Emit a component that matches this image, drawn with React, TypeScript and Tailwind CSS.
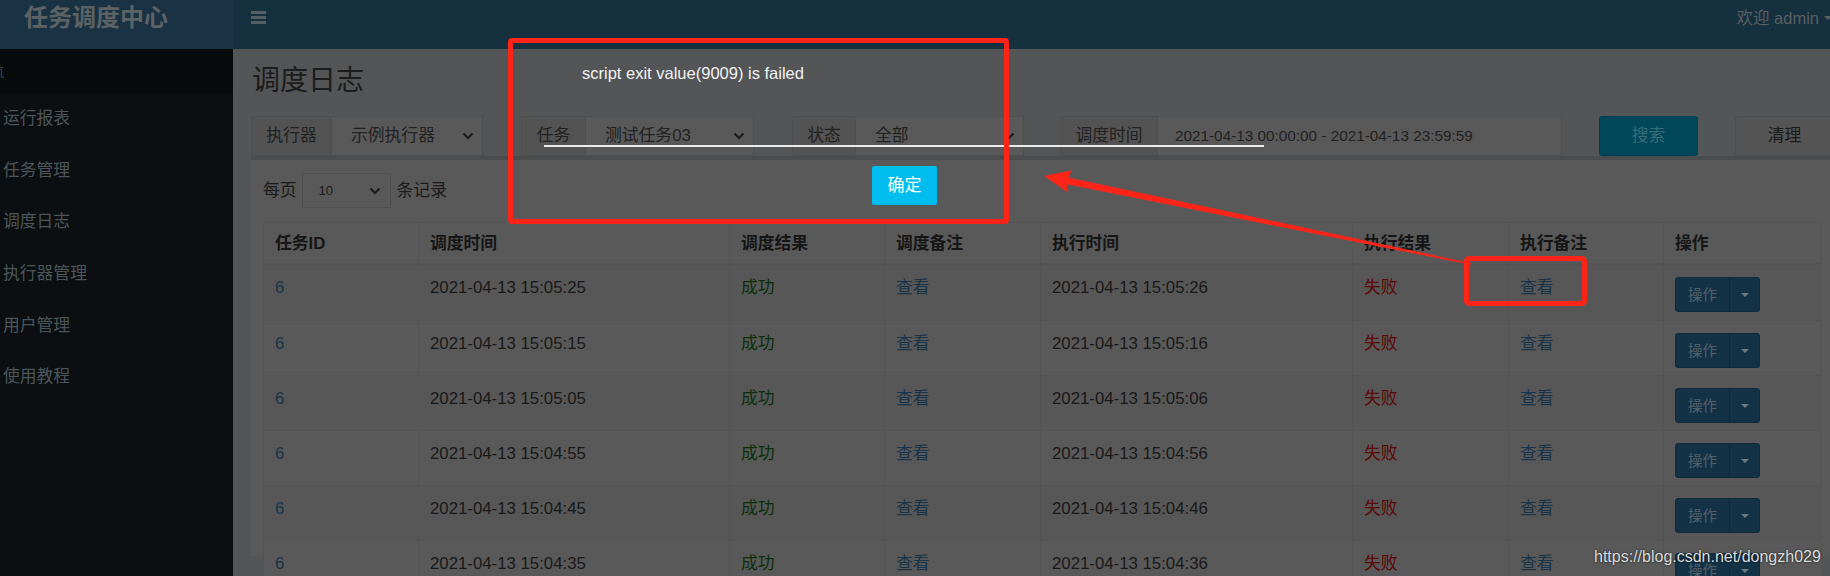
import React from 'react';

const logs = [
  ['2021-04-13 15:05:25', '2021-04-13 15:05:26'],
  ['2021-04-13 15:05:15', '2021-04-13 15:05:16'],
  ['2021-04-13 15:05:05', '2021-04-13 15:05:06'],
  ['2021-04-13 15:04:55', '2021-04-13 15:04:56'],
  ['2021-04-13 15:04:45', '2021-04-13 15:04:46'],
  ['2021-04-13 15:04:35', '2021-04-13 15:04:36'],
];

const navItems = ['运行报表', '任务管理', '调度日志', '执行器管理', '用户管理', '使用教程'];

const cols = 'grid grid-cols-[155px_311px_155px_156px_312px_156px_155px_158px]';

function Chevron() {
  return (
    <svg width="12" height="8" viewBox="0 0 12 8" className="shrink-0">
      <polyline points="1.5,1.5 6,6 10.5,1.5" fill="none" stroke="#1c1c1c" strokeWidth="2" />
    </svg>
  );
}

function FilterSelect({ label, value, labelW, selectW }: { label: string; value: string; labelW: string; selectW: string }) {
  return (
    <div className="flex h-[40px] shrink-0">
      <div className={`${labelW} flex items-center justify-center border border-[#4e4f51] bg-[#535353] text-[16.8px] text-[#222]`}>
        {label}
      </div>
      <div className={`${selectW} flex items-center justify-between border border-l-0 border-[#4e4f51] bg-[#595959] pl-[19px] pr-[8px] text-[16.8px] text-[#222]`}>
        <span>{value}</span>
        <Chevron />
      </div>
    </div>
  );
}

export default function App() {
  return (
    <div className="relative h-[576px] w-[1830px] overflow-hidden bg-[#545557] font-['Liberation_Sans','Noto_Sans_CJK_SC',sans-serif]">
      {/* Header */}
      <header className="flex h-[49px]">
        <div className="w-[233px] shrink-0 bg-[#193344] pl-[24px] pt-[4px] text-[24px] font-bold leading-[28px] text-[#5d6265]">
          任务调度中心
        </div>
        <div className="flex flex-1 items-start justify-between bg-[#15303f]">
          <div className="ml-[18px] mt-[11px] flex w-[15px] flex-col gap-[2px]">
            <span className="h-[3px] bg-[#566064]" />
            <span className="h-[3px] bg-[#566064]" />
            <span className="h-[3px] bg-[#566064]" />
          </div>
          <div className="mt-[7px] flex items-center text-[16.5px] leading-[22px] text-[#5a5f62]">
            <span>欢迎 admin</span>
            <span className="ml-[5px] mr-[-2px] h-0 w-0 border-l-[4px] border-r-[4px] border-t-[4px] border-l-transparent border-r-transparent border-t-[#5a5f62]" />
          </div>
        </div>
      </header>

      <div className="flex h-[527px]">
        {/* Sidebar */}
        <aside className="w-[233px] shrink-0 bg-[#0b0f11]">
          <div className="flex h-[44px] items-center overflow-hidden bg-[#080b0c]">
            <span className="ml-[-24px] text-[14px] text-[#374348]">导航</span>
          </div>
          {navItems.map((item) => (
            <div key={item} className="flex h-[51.6px] items-center pl-[3px] text-[16.8px] text-[#4c565a]">
              {item}
            </div>
          ))}
        </aside>

        {/* Content */}
        <main className="min-w-0 flex-1 overflow-hidden pl-[18px]">
          <h1 className="pl-[1px] pt-[15px] text-[28px] font-normal leading-[34px] text-[#1c1c1c]">调度日志</h1>

          {/* Filters */}
          <div className="mt-[18px] flex h-[40px]">
            <FilterSelect label="执行器" value="示例执行器" labelW="w-[81px]" selectW="w-[151px]" />
            <div className="ml-[38px]">
              <FilterSelect label="任务" value="测试任务03" labelW="w-[65px]" selectW="w-[168px]" />
            </div>
            <div className="ml-[38px]">
              <FilterSelect label="状态" value="全部" labelW="w-[64px]" selectW="w-[168px]" />
            </div>
            <div className="ml-[36px] flex h-[40px] shrink-0">
              <div className="flex w-[98px] items-center justify-center border border-[#4e4f51] bg-[#535353] text-[16.8px] text-[#222]">
                调度时间
              </div>
              <div className="flex w-[404px] items-center border border-l-0 border-[#4e4f51] bg-[#595959] pl-[17px] text-[15.3px] text-[#222]">
                2021-04-13 00:00:00 - 2021-04-13 23:59:59
              </div>
            </div>
            <div className="ml-[37px] flex h-[40px] w-[99px] shrink-0 items-center justify-center rounded-[3px] border border-[#003f50] bg-[#00475a] text-[16.8px] text-[#3b6b78]">
              搜索
            </div>
            <div className="ml-[37px] flex h-[40px] w-[99px] shrink-0 items-center justify-center rounded-[3px] border border-[#4d4d4d] bg-[#555555] text-[16.8px] text-[#1a1a1a]">
              清理
            </div>
          </div>

          {/* Box */}
          <section className="h-[400px] border-t-[4px] border-[#4b4c4e] bg-[#595959] pl-[12px] pt-[13px]">
            <div className="flex h-[35px] items-center text-[16.8px] text-[#1c1c1c]">
              <span>每页</span>
              <div className="ml-[5px] flex h-[35px] w-[89px] items-center justify-between border border-[#4e4f51] pl-[16px] pr-[9px] text-[13px] text-[#1c1c1c]">
                <span>10</span>
                <Chevron />
              </div>
              <span className="ml-[6px]">条记录</span>
            </div>

            <div className="mt-[14px] w-[1558px] border-l border-t border-[#545454]">
              <div className={`${cols} h-[42px] border-b-2 border-[#545454] text-[16.8px] font-bold leading-[22px] text-[#161616]`}>
                {['任务ID', '调度时间', '调度结果', '调度备注', '执行时间', '执行结果', '执行备注', '操作'].map((h) => (
                  <div key={h} className="border-r border-[#545454] pl-[11px] pt-[10px]">
                    {h}
                  </div>
                ))}
              </div>
              {logs.map(([trigger, handle], i) => (
                <div
                  key={trigger}
                  className={`${cols} ${i === 0 ? 'h-[56px]' : 'h-[55px]'} ${i % 2 === 0 ? 'bg-[#575757]' : 'bg-[#595959]'} border-b border-[#545454] text-[16.8px] leading-[22px]`}
                >
                  <div className="border-r border-[#545454] pl-[11px] pt-[12px] text-[#193448]">6</div>
                  <div className="border-r border-[#545454] pl-[11px] pt-[12px] text-[#191919]">{trigger}</div>
                  <div className="border-r border-[#545454] pl-[11px] pt-[12px] text-[#0b300b]">成功</div>
                  <div className="border-r border-[#545454] pl-[11px] pt-[12px] text-[#193448]">查看</div>
                  <div className="border-r border-[#545454] pl-[11px] pt-[12px] text-[#191919]">{handle}</div>
                  <div className="border-r border-[#545454] pl-[11px] pt-[12px] text-[#5e0707]">失败</div>
                  <div className="border-r border-[#545454] pl-[11px] pt-[12px] text-[#193448]">查看</div>
                  <div className="border-r border-[#545454] pl-[11px] pt-[12px]">
                    <div className="flex h-[35px] w-[85px] overflow-hidden rounded-[3px] border border-[#112b3c] bg-[#133246]">
                      <div className="flex w-[54px] items-center justify-center border-r border-[#10293a] text-[14.5px] text-[#53616a]">
                        操作
                      </div>
                      <div className="flex flex-1 items-center justify-center">
                        <span className="h-0 w-0 border-l-[4px] border-r-[4px] border-t-[4px] border-l-transparent border-r-transparent border-t-[#6f7a80]" />
                      </div>
                    </div>
                  </div>
                </div>
              ))}
            </div>
          </section>
        </main>
      </div>

      {/* Dialog message over the shade */}
      <div className="absolute left-[582px] top-[62px] text-[16.5px] leading-[22px] text-[#f2f2f2]">
        script exit value(9009) is failed
      </div>
      <div className="absolute left-[544px] top-[145px] h-[2px] w-[720px] bg-[#ececec]" />
      <div className="absolute left-[872px] top-[166px] flex h-[39px] w-[65px] items-center justify-center rounded-[2px] bg-[#00bdf0] text-[17px] text-white">
        确定
      </div>

      {/* Annotations */}
      <div className="absolute left-[508px] top-[38px] h-[186px] w-[501px] rounded-[4px] border-[5px] border-[#ff2418]" />
      <div className="absolute left-[1464px] top-[256px] h-[50px] w-[123px] rounded-[5px] border-[5px] border-[#ff2418]" />
      <svg className="pointer-events-none absolute left-0 top-0" width="1830" height="576" viewBox="0 0 1830 576">
        <polygon
          points="1044,176 1071.7,170.4 1068.2,177.4 1471.2,263.2 1470.8,264.8 1066.8,184.2 1067.3,192"
          fill="#ff2418"
        />
      </svg>

      <div className="absolute left-[1594px] top-[546px] text-[16px] leading-[22px] text-[#dcdcdc] [text-shadow:0_0_2px_rgba(0,0,0,0.9)]">
        https://blog.csdn.net/dongzh029
      </div>
    </div>
  );
}
